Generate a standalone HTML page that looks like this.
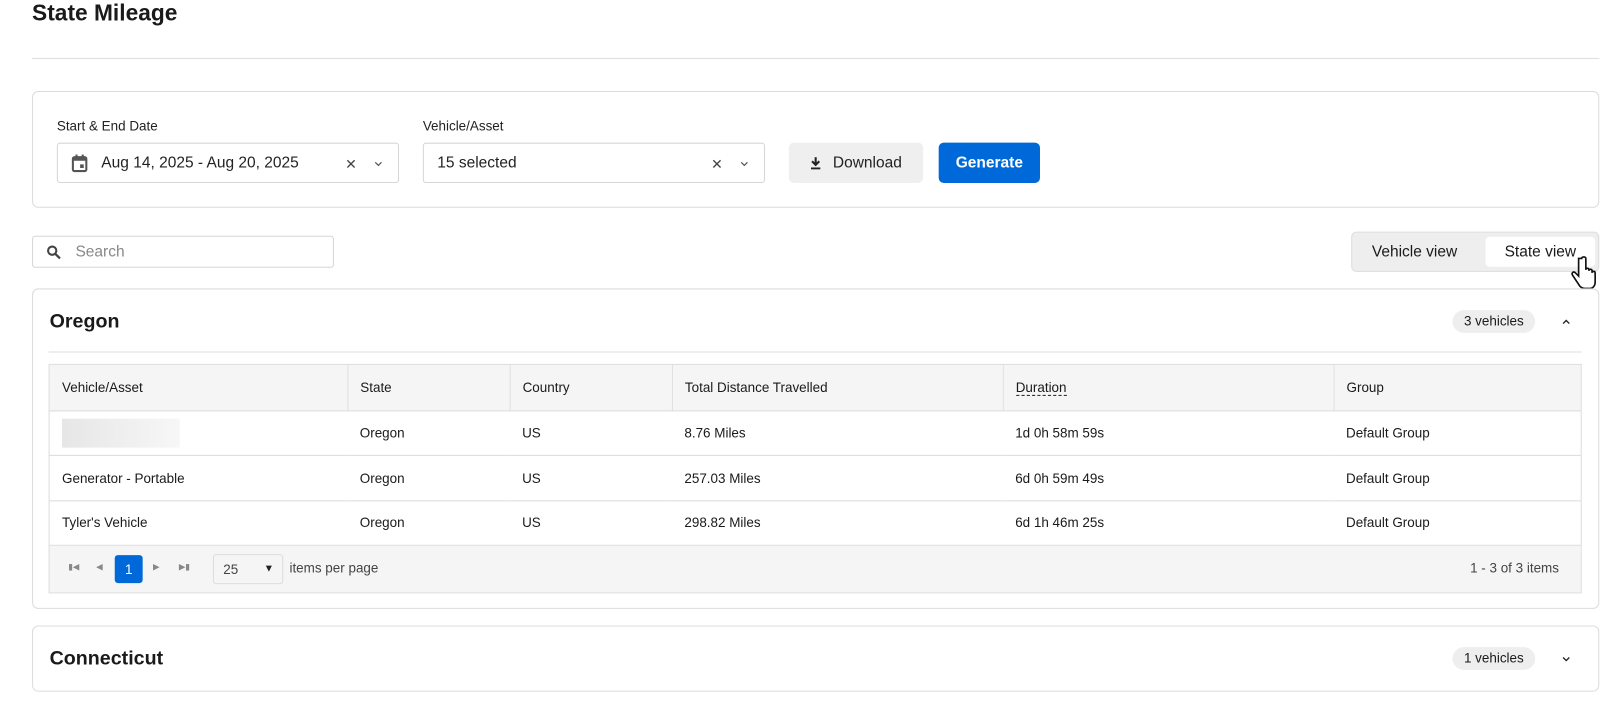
<!DOCTYPE html>
<html><head><meta charset="utf-8">
<style>
*{box-sizing:border-box;margin:0;padding:0}
body{width:1621px;height:703px;background:#fff;font-family:"Liberation Sans",sans-serif;color:#1a1a1a;position:relative;overflow:hidden;font-size:14px}
#w{position:absolute;left:0;top:0;width:1568px;height:680px;transform:scale(1.0338);transform-origin:0 0}
.abs{position:absolute}
.title{left:31px;top:0px;font-size:22px;font-weight:bold;line-height:26px}
.hr{left:31px;width:1516px;top:56px;height:1px;background:#ddd}
.card{border:1px solid #dcdcdc;border-radius:6px;background:#fff}
.lbl{font-size:13px;color:#222}
.inp{border:1px solid #d6d6d6;border-radius:3px;height:39px;display:flex;align-items:center;font-size:15px;color:#222}
.btn{border-radius:5px;height:39px;display:flex;align-items:center;justify-content:center;font-size:15px}
table{border-collapse:collapse;width:100%;font-size:13px}
td,th{text-align:left;padding:0 12px;font-weight:normal;border-right:1px solid #e0e0e0}
th{height:44px;background:#f5f5f5;border-bottom:1px solid #dcdcdc}
td{height:43.6px;border-bottom:1px solid #dcdcdc;border-right:none}
</style></head><body><div id="w">
<div class="abs title">State Mileage</div>
<div class="abs hr"></div>

<div class="abs card" style="left:31px;top:88px;width:1516px;height:113px"></div>
<div class="abs lbl" style="left:55px;top:114px">Start &amp; End Date</div>
<div class="abs lbl" style="left:409px;top:114px">Vehicle/Asset</div>
<div class="abs inp" style="left:55px;top:138px;width:331px;padding-left:13px">
<svg width="16" height="18" viewBox="0 0 16 18"><rect x="1.5" y="3" width="13" height="13.5" rx="1.5" fill="none" stroke="#555" stroke-width="2"/><rect x="1.5" y="3" width="13" height="3.5" fill="#555"/><rect x="4" y="0.5" width="2" height="4" fill="#555"/><rect x="10" y="0.5" width="2" height="4" fill="#555"/><rect x="8.5" y="10" width="3.5" height="3.5" fill="#555"/></svg>
<span style="margin-left:13px">Aug 14, 2025 - Aug 20, 2025</span>
<svg class="abs" style="left:279px;top:15px" width="9" height="9" viewBox="0 0 9 9"><path d="M1 1L8 8M8 1L1 8" stroke="#444" stroke-width="1.3"/></svg>
<svg class="abs" style="left:306px;top:17px" width="8" height="5" viewBox="0 0 8 5"><path d="M1 1L4 4L7 1" stroke="#555" stroke-width="1.2" fill="none"/></svg></div>
<div class="abs inp" style="left:409px;top:138px;width:331px;padding-left:13px">15 selected
<svg class="abs" style="left:279px;top:15px" width="9" height="9" viewBox="0 0 9 9"><path d="M1 1L8 8M8 1L1 8" stroke="#444" stroke-width="1.3"/></svg>
<svg class="abs" style="left:306px;top:17px" width="8" height="5" viewBox="0 0 8 5"><path d="M1 1L4 4L7 1" stroke="#555" stroke-width="1.2" fill="none"/></svg></div>
<div class="abs btn" style="left:763px;top:138px;width:130px;background:#efefef;color:#222"><svg width="10" height="12" viewBox="0 0 10 12" style="margin-right:12px"><path d="M5 0V7M1.5 4L5 7.5L8.5 4" stroke="#222" stroke-width="2" fill="none"/><rect x="0.5" y="10" width="9" height="1.8" fill="#222"/></svg>Download</div>
<div class="abs btn" style="left:908px;top:138px;width:98px;background:#0069d9;color:#fff;font-weight:bold">Generate</div>

<div class="abs inp" style="left:31px;top:228px;width:292px;height:31px;padding-left:13px;color:#888">
<svg width="14" height="14" viewBox="0 0 14 14"><circle cx="5.5" cy="5.5" r="4" fill="none" stroke="#444" stroke-width="2"/><path d="M8.5 8.5L13 13" stroke="#444" stroke-width="2.2"/></svg>
<span style="margin-left:14px">Search</span></div>

<div class="abs" style="left:1307px;top:224px;width:240px;height:39px;background:#eee;border:1px solid #ddd;border-radius:5px"></div>
<div class="abs" style="left:1327px;top:235px;font-size:15px">Vehicle view</div>
<div class="abs" style="left:1437px;top:229px;width:106px;height:29px;background:#fff;border-radius:4px;font-size:15px;text-align:center;line-height:29px">State view</div>
<svg class="abs" style="left:1518px;top:247px" width="30" height="36" viewBox="0 0 30 36"><path d="M9 3v17l-3-3c-2-2-4 0-3 2l6 9c1 2 3 4 6 4h5c3 0 5-3 5-6v-9c0-2-3-2-3 0v-2c0-2-3-2-3 0v-1c0-2-3-2-3 0V3c0-2-4-2-4 0z" fill="#fff" stroke="#111" stroke-width="1.6"/></svg>

<div class="abs card" style="left:31px;top:279px;width:1516px;height:310px"></div>
<div class="abs" style="left:48px;top:301px;font-size:19px;font-weight:bold">Oregon</div>
<div class="abs" style="left:1405px;top:300px;width:80px;height:22px;border-radius:11px;background:#eee;font-size:13px;text-align:center;line-height:22px">3 vehicles</div>
<svg class="abs" style="left:1511px;top:309px" width="8" height="5" viewBox="0 0 8 5"><path d="M1 4L4 1L7 4" stroke="#222" stroke-width="1.3" fill="none"/></svg>
<div class="abs" style="left:47px;top:340px;width:1483px;height:1px;background:#ddd"></div>

<div class="abs" style="left:47px;top:352px;width:1483px;border:1px solid #dcdcdc">
<table>
<colgroup><col style="width:288px"><col style="width:157px"><col style="width:157px"><col style="width:320px"><col style="width:320px"><col></colgroup>
<tr><th>Vehicle/Asset</th><th>State</th><th>Country</th><th>Total Distance Travelled</th><th><span style="border-bottom:1px dashed #333">Duration</span></th><th style="border-right:none">Group</th></tr>
<tr><td><div style="width:114px;height:28px;background:linear-gradient(90deg,#e6e6e6,#f7f7f7)"></div></td><td>Oregon</td><td>US</td><td>8.76 Miles</td><td>1d 0h 58m 59s</td><td>Default Group</td></tr>
<tr><td>Generator - Portable</td><td>Oregon</td><td>US</td><td>257.03 Miles</td><td>6d 0h 59m 49s</td><td>Default Group</td></tr>
<tr><td>Tyler's Vehicle</td><td>Oregon</td><td>US</td><td>298.82 Miles</td><td>6d 1h 46m 25s</td><td>Default Group</td></tr>
</table>
<div style="height:45px;background:#f5f5f5;position:relative;font-size:13px;color:#444">
<span class="abs" style="left:18px;top:16px;font-size:8px;color:#888">▮◀</span>
<span class="abs" style="left:45px;top:16px;font-size:8px;color:#888">◀</span>
<div class="abs" style="left:63px;top:9px;width:27px;height:27px;background:#0069d9;border-radius:3px;color:#fff;text-align:center;line-height:27px">1</div>
<span class="abs" style="left:100px;top:16px;font-size:8px;color:#888">▶</span>
<span class="abs" style="left:125px;top:16px;font-size:8px;color:#888">▶▮</span>
<div class="abs" style="left:158px;top:8px;width:68px;height:29px;border:1px solid #ddd;border-radius:3px;padding-left:9px;line-height:27px">25<span style="position:absolute;right:8px;font-size:10px;color:#222">▼</span></div>
<span class="abs" style="left:232px;top:14px">items per page</span>
<span class="abs" style="right:21px;top:14px">1 - 3 of 3 items</span>
</div>
</div>

<div class="abs card" style="left:31px;top:605px;width:1516px;height:64px"></div>
<div class="abs" style="left:48px;top:627px;font-size:19px;font-weight:bold">Connecticut</div>
<div class="abs" style="left:1405px;top:626px;width:80px;height:22px;border-radius:11px;background:#eee;font-size:13px;text-align:center;line-height:22px">1 vehicles</div>
<svg class="abs" style="left:1511px;top:635px" width="8" height="5" viewBox="0 0 8 5"><path d="M1 1L4 4L7 1" stroke="#222" stroke-width="1.3" fill="none"/></svg>
</div></body></html>
